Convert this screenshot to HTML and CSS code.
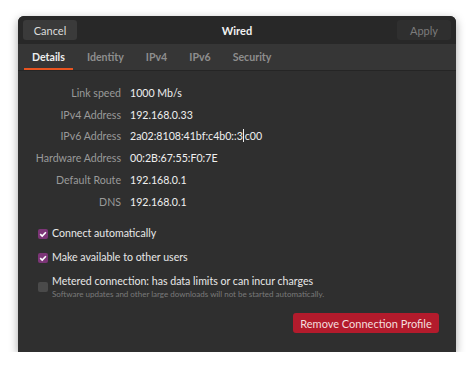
FILE: index.html
```html
<!DOCTYPE html>
<html lang="en">
<head>
    <meta charset="UTF-8">
    <meta name="viewport" content="width=device-width, initial-scale=1.0">
    <title>Wired</title>
    <link rel="stylesheet" href="styles.css">
</head>
<body>
    <div class="dialog">
        <header class="titlebar">
            <button class="btn">Cancel</button>
            <h1>Wired</h1>
            <button class="btn disabled">Apply</button>
        </header>

        <nav class="tabs">
            <span class="tab active">Details</span>
            <span class="tab">Identity</span>
            <span class="tab">IPv4</span>
            <span class="tab">IPv6</span>
            <span class="tab">Security</span>
        </nav>

        <section class="content">
            <div class="details">
                <span class="label">Link speed</span><span class="value">1000 Mb/s</span>
                <span class="label">IPv4 Address</span><span class="value">192.168.0.33</span>
                <span class="label">IPv6 Address</span><span class="value">2a02:8108:41bf:c4b0::3<i class="caret"></i>c00</span>
                <span class="label">Hardware Address</span><span class="value">00:2B:67:55:F0:7E</span>
                <span class="label">Default Route</span><span class="value">192.168.0.1</span>
                <span class="label">DNS</span><span class="value">192.168.0.1</span>
            </div>

            <div class="options">
                <label class="check">
                    <span class="box checked"><svg viewBox="0 0 10 10"><path d="M2.2 5.2 L4.2 7.1 L7.9 3.2"/></svg></span>
                    <span>Connect automatically</span>
                </label>
                <label class="check">
                    <span class="box checked"><svg viewBox="0 0 10 10"><path d="M2.2 5.2 L4.2 7.1 L7.9 3.2"/></svg></span>
                    <span>Make available to other users</span>
                </label>
                <label class="check metered">
                    <span class="box"></span>
                    <span class="text">
                        <span>Metered connection: has data limits or can incur charges</span>
                        <small>Software updates and other large downloads will not be started automatically.</small>
                    </span>
                </label>
            </div>

            <div class="actions">
                <button class="btn danger">Remove Connection Profile</button>
            </div>
        </section>
    </div>
</body>
</html>
```

FILE: styles.css
```css
body {
    margin: 0;
    background-color: #ffffff;
    font-family: Lato, "Noto Sans", sans-serif;
    font-size: 10.6px;
    color: #e8e8e8;
}
.dialog {
    width: 438px;
    height: 336px;
    margin: 16px 0 0 18px;
    background-color: #2f2f2f;
    border-radius: 6px 6px 0 0;
    box-shadow: 0 3px 10px rgba(0, 0, 0, 0.35);
    display: flex;
    flex-direction: column;
    overflow: hidden;
}
.titlebar {
    height: 28px;
    background-color: #282828;
    display: flex;
    align-items: center;
    justify-content: space-between;
    padding: 0 5px;
}
.titlebar h1 {
    margin: 0;
    font-size: 11px;
    font-weight: bold;
    color: #f2f2f2;
}
.btn {
    font-family: inherit;
    font-size: 11px;
    border: none;
    border-radius: 3px;
    height: 20px;
    width: 54px;
    padding: 0;
    color: #dcdcdc;
    background-color: #3a3a3a;
}
.btn.disabled {
    color: #7c7c7c;
    background-color: #2f2f2f;
}
.tabs {
    height: 26px;
    background-color: #363636;
    border-bottom: 1px solid #252525;
    display: flex;
    padding: 0 6px;
}
.tab {
    line-height: 26px;
    color: #8e8e8e;
    font-weight: bold;
}
.tab.active {
    color: #eeeeee;
    padding: 0 8px;
    box-shadow: inset 0 -2px 0 #e95420;
}
.tab:nth-child(2) { margin-left: 14px; }
.tab:nth-child(3) { margin-left: 22px; }
.tab:nth-child(4) { margin-left: 22px; }
.tab:nth-child(5) { margin-left: 22px; }
.content {
    flex: 1;
    padding: 15px 17px 0 14px;
}
.details {
    display: grid;
    grid-template-columns: 89px auto;
    column-gap: 9px;
    row-gap: 6px;
    line-height: 15.7px;
}
.label {
    text-align: right;
    color: #9a9a9a;
    white-space: nowrap;
}
.value {
    color: #f0f0f0;
    white-space: nowrap;
}
.caret {
    display: inline-block;
    width: 1px;
    height: 13px;
    margin: 0 0.5px;
    background-color: #f0f0f0;
    vertical-align: -2px;
}
.options {
    margin-top: 16px;
    padding-left: 6px;
    display: flex;
    flex-direction: column;
    gap: 9px;
}
.check {
    display: flex;
    align-items: center;
    gap: 4px;
    line-height: 15px;
}
.box {
    width: 10px;
    height: 10px;
    border-radius: 2px;
    background-color: #4a4a4a;
    flex: none;
}
.box.checked {
    background-color: #7c3577;
}
.box svg {
    display: block;
    width: 10px;
    height: 10px;
    fill: none;
    stroke: #ffffff;
    stroke-width: 1.6;
}
.metered .text {
    display: flex;
    flex-direction: column;
}
.metered small {
    font-size: 8px;
    line-height: 10px;
    color: #7a7a7a;
}
.actions {
    display: flex;
    justify-content: flex-end;
    margin-top: 14px;
}
.btn.danger {
    background-color: #b31b2c;
    color: #f4dede;
    height: 20px;
    width: 146px;
    padding: 0;
}
```
